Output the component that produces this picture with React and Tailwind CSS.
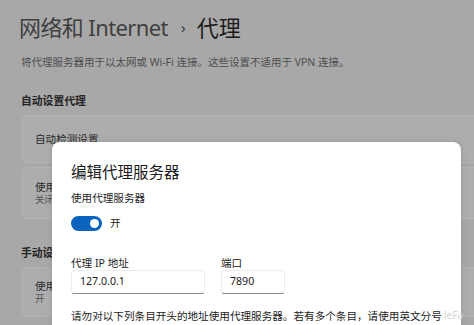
import React from 'react'

const font = { fontFamily: '"Noto Sans", "Noto Sans CJK SC", sans-serif' }

function BgCard({ className, children }) {
  return (
    <div className={`ml-[1px] rounded-[5px] bg-[#adadad] border border-[#b3b3b3] pl-[12px] flex flex-col justify-center ${className}`}>
      {children}
    </div>
  )
}

function Toggle() {
  return (
    <div className="w-[31px] h-[15px] rounded-full bg-[#0a64bd] flex items-center justify-end pr-[3px]">
      <div className="w-[9px] h-[9px] rounded-full bg-white" />
    </div>
  )
}

function Field({ label, value, width }) {
  return (
    <div className="flex flex-col">
      <span className="text-[10.6px] leading-[14px] text-[#1c1c1c]">{label}</span>
      <div
        className={`${width} h-[24px] rounded-[3px] border border-[#ececec] border-b-[#8c8c8c] bg-white flex items-center pl-[8px] text-[10.6px] text-[#1c1c1c]`}
      >
        {value}
      </div>
    </div>
  )
}

// texts of the page behind the dialog are cut off where the dialog starts
function Hidden({ children, className }) {
  return <span className={`block w-[18px] overflow-hidden whitespace-nowrap ${className}`}>{children}</span>
}

export default function App() {
  return (
    <div className="relative w-[474px] h-[325px] overflow-hidden bg-[#a8a8a8]" style={font}>
      <div className="pl-[21px] pt-[12px]">
        <div className="flex items-center h-[30px] text-[22px] -ml-[2px]">
          <span className="text-[#3f3f3f] tracking-[-0.6px]">网络和 Internet</span>
          <span className="text-[#3a3a3a] text-[15px] ml-[13px] mr-[11px]">›</span>
          <span className="text-[#1c1c1c]">代理</span>
        </div>
        <p className="mt-[13px] text-[10.5px] leading-[14px] text-[#4e4e4e] whitespace-nowrap">
          将代理服务器用于以太网或 Wi-Fi 连接。这些设置不适用于 VPN 连接。
        </p>
        <p className="mt-[25px] text-[10.8px] leading-[14px] font-semibold text-[#242424]">自动设置代理</p>
        <div className="mt-[7px] flex flex-col gap-[4px] -mr-[10px]">
          <BgCard className="h-[48px]">
            <span className="text-[10.6px] leading-[14px] text-[#2a2a2a]">自动检测设置</span>
          </BgCard>
          <BgCard className="h-[52px]">
            <Hidden className="text-[10.6px] leading-[13px] text-[#2a2a2a]">使用设置脚本</Hidden>
            <Hidden className="text-[9.5px] leading-[12px] text-[#555]">关闭</Hidden>
          </BgCard>
        </div>
        <Hidden className="mt-[27px] w-[31px] text-[10.8px] leading-[14px] font-semibold text-[#242424]">手动设置代理</Hidden>
        <div className="mt-[7px] -mr-[10px]">
          <BgCard className="h-[50px]">
            <Hidden className="text-[10.6px] leading-[13px] text-[#2a2a2a]">使用代理服务器</Hidden>
            <Hidden className="text-[9.5px] leading-[12px] text-[#555]">开</Hidden>
          </BgCard>
        </div>
      </div>

      <div className="absolute left-[52px] top-[142px] w-[409px] h-[220px] bg-white rounded-[8px] shadow-[0_0_6px_rgba(0,0,0,0.12)] px-[19px] pt-[20px]">
        <h2 className="text-[15.5px] leading-[20px] text-[#1a1a1a]">编辑代理服务器</h2>
        <p className="mt-[9px] text-[10.6px] leading-[14px] text-[#1c1c1c]">使用代理服务器</p>
        <div className="mt-[11px] flex items-center gap-[8px]">
          <Toggle />
          <span className="text-[10.6px] text-[#1c1c1c]">开</span>
        </div>
        <div className="mt-[24px] flex gap-[16px]">
          <Field label="代理 IP 地址" value="127.0.0.1" width="w-[134px]" />
          <Field label="端口" value="7890" width="w-[64px]" />
        </div>
        <p className="mt-[15px] text-[10.6px] leading-[14px] text-[#1c1c1c] whitespace-nowrap">
          请勿对以下列条目开头的地址使用代理服务器。若有多个条目，请使用英文分号
        </p>
      </div>

      <span className="absolute left-[444px] top-[308px] text-[10px] leading-[14px] text-[#d4d4d4] whitespace-nowrap">leFa</span>
    </div>
  )
}
